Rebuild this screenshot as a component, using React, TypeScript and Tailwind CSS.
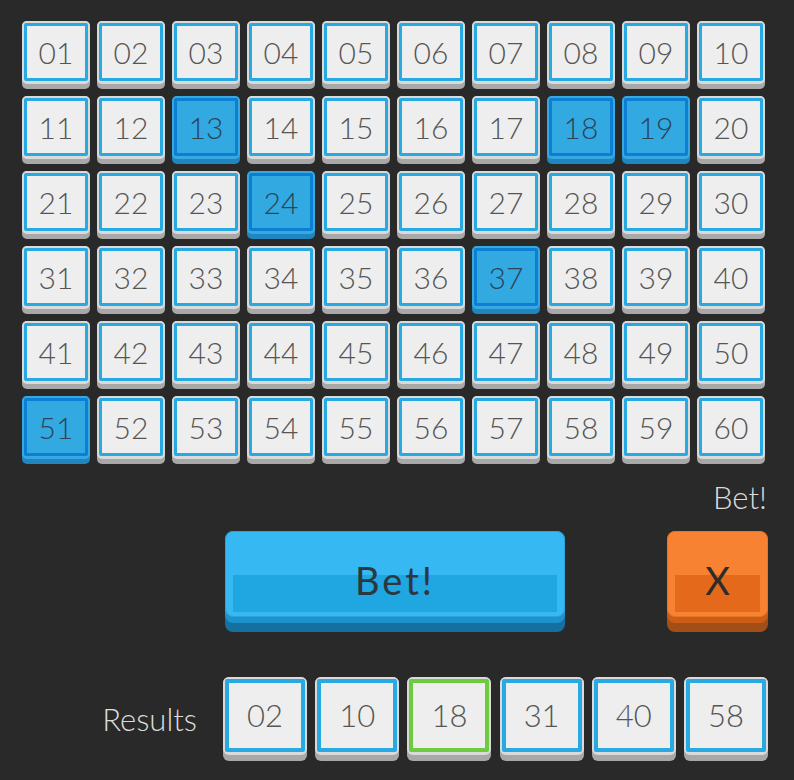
import React from "react";

const selected = new Set([13, 18, 19, 24, 37, 51]);
const results: { n: string; green?: boolean }[] = [
  { n: "02" },
  { n: "10" },
  { n: "18", green: true },
  { n: "31" },
  { n: "40" },
  { n: "58" },
];

function Tile({ n }: { n: number }) {
  const label = n < 10 ? `0${n}` : `${n}`;
  if (selected.has(n)) {
    return (
      <div className="w-[68px] h-[68px] rounded-[5px] bg-[#1f86bf] pb-[5px]">
        <div className="h-full rounded-[5px] bg-[#38a8e0] px-[2px] pt-[2px] pb-[3px]">
          <div className="h-full rounded-[2px] border-[3px] border-[#0c7fd4] bg-[#33a9e2] flex items-center justify-center text-[30px] font-light leading-none text-[#2a4558]">
            {label}
          </div>
        </div>
      </div>
    );
  }
  return (
    <div className="w-[68px] h-[68px] rounded-[5px] bg-[#a8a8a8] pb-[5px]">
      <div className="h-full rounded-[5px] bg-[#dadada] px-[2px] pt-[2px] pb-[3px]">
        <div className="h-full rounded-[2px] border-[3px] border-[#29a9e1] bg-[#eeeeee] flex items-center justify-center text-[30px] font-light leading-none text-[#555555]">
          {label}
        </div>
      </div>
    </div>
  );
}

function ResultTile({ n, green }: { n: string; green?: boolean }) {
  return (
    <div className="w-[84px] h-[84px] rounded-[6px] bg-[#a8a8a8] pb-[6px]">
      <div className="h-full rounded-[6px] bg-[#dadada] px-[2px] pt-[2px] pb-[3px]">
        <div
          className={
            green
              ? "h-full rounded-[2px] border-[4px] border-[#6ccb3f] bg-[#eeeeee] flex items-center justify-center text-[31px] font-light leading-none text-[#555555]"
              : "h-full rounded-[2px] border-[4px] border-[#29a9e1] bg-[#eeeeee] flex items-center justify-center text-[31px] font-light leading-none text-[#555555]"
          }
        >
          {n}
        </div>
      </div>
    </div>
  );
}

export default function App() {
  const nums = Array.from({ length: 60 }, (_, i) => i + 1);
  return (
    <div className="min-h-[780px] w-full bg-[#292929] font-['Lato','Noto_Sans',sans-serif]">
      <div className="w-[768px] pl-[22px] pt-[21px]">
        <div className="grid grid-cols-[repeat(10,68px)] gap-[7px]">
          {nums.map((n) => (
            <Tile key={n} n={n} />
          ))}
        </div>

        <div className="mt-[18px] flex justify-end pr-[1px]">
          <span className="block text-[31px] leading-[31px] font-light text-[#dcdcdc]">Bet!</span>
        </div>

        <div className="mt-[18px] flex justify-end gap-[102px]">
          <div className="w-[340px] h-[101px] rounded-[8px] bg-[#15709f]">
            <div className="relative h-[86px] rounded-[8px] border border-[#2aa3da] bg-[#36b9f2] shadow-[0_6px_0_#1d92cc] flex flex-col pt-[43px] px-[7px] pb-[4px]">
              <div className="h-[37px] bg-[#20a6e0]" />
              <div className="absolute inset-0 flex items-center justify-center pt-[12px] text-[38px] leading-none tracking-[3px] text-[#2c3840]">
                Bet!
              </div>
            </div>
          </div>
          <div className="w-[101px] h-[101px] rounded-[8px] bg-[#a24e17]">
            <div className="relative h-[86px] rounded-[8px] border border-[#e77526] bg-[#f68232] shadow-[0_6px_0_#cb5d17] flex flex-col pt-[43px] px-[7px] pb-[4px]">
              <div className="h-[37px] bg-[#e4691b]" />
              <div className="absolute inset-0 flex items-center justify-center pt-[12px] text-[38px] leading-none text-[#2c2c2c]">
                X
              </div>
            </div>
          </div>
        </div>

        <div className="mt-[45px] flex items-center justify-end">
          <span className="mr-[26px] text-[31px] font-light leading-none text-[#dcdcdc]">Results</span>
          <div className="flex gap-[8.2px]">
            {results.map((r) => (
              <ResultTile key={r.n} n={r.n} green={r.green} />
            ))}
          </div>
        </div>
      </div>
    </div>
  );
}
